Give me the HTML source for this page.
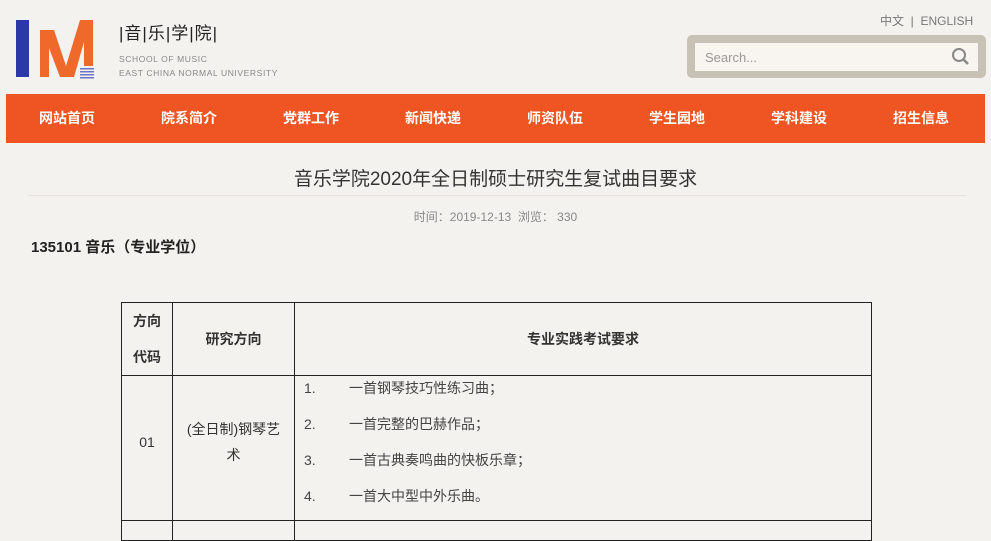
<!DOCTYPE html>
<html><head><meta charset="utf-8"><style>
body{margin:0;width:991px;height:523px;overflow:hidden;background:#f4f2ee;font-family:"Liberation Sans","Noto Sans CJK SC",sans-serif;position:relative}
.a{position:absolute}
.nav{left:6px;top:94px;width:979px;height:49px;background:#ef5423;display:flex}
.nav div{width:122px;text-align:center;color:#fff;font-weight:bold;font-size:14px;line-height:49px}
table{position:absolute;left:121px;top:302px;border-collapse:collapse;width:751px;font-size:14px;color:#333}
td{border:1px solid #222;text-align:center;padding:0}
.up{position:relative;top:-6px}
</style></head><body>
<svg class="a" style="left:14px;top:18px" width="82" height="62">
<rect x="2" y="2" width="13" height="57" fill="#2b39a8"/>
<polygon points="26,12 40,12 52,48 66,2 79,2 79,48 70,48 70,24 60,59 46,59 35,30 35,59 26,59" fill="#ef6a2a"/>
<rect x="66" y="50" width="14" height="1.5" fill="#6a73c4"/><rect x="66" y="53" width="14" height="1.5" fill="#6a73c4"/><rect x="66" y="56" width="14" height="1.5" fill="#6a73c4"/><rect x="66" y="59" width="14" height="1.5" fill="#6a73c4"/>
</svg>
<div class="a" style="left:119px;top:19px;font-size:17px;color:#222;letter-spacing:1px">|音|乐|学|院|</div>
<div class="a" style="left:119px;top:52px;font-size:8.5px;color:#888;letter-spacing:.6px;line-height:14px">SCHOOL OF MUSIC<br>EAST CHINA NORMAL UNIVERSITY</div>
<div class="a" style="left:880px;top:12px;font-size:12px;color:#777">中文 &nbsp;|&nbsp; ENGLISH</div>
<div class="a" style="left:687px;top:35px;width:299px;height:43px;background:#c7c2b5;border-radius:5px"></div>
<div class="a" style="left:695px;top:43px;width:283px;height:28px;background:#f8f4ef"></div>
<div class="a" style="left:705px;top:50px;font-size:13px;color:#999">Search...</div>
<svg class="a" style="left:951px;top:47px" width="20" height="20"><circle cx="8" cy="8" r="6" stroke="#888" stroke-width="2" fill="none"/><line x1="12.5" y1="12.5" x2="17" y2="17" stroke="#888" stroke-width="2.5"/></svg>
<div class="a nav"><div>网站首页</div><div>院系简介</div><div>党群工作</div><div>新闻快递</div><div>师资队伍</div><div>学生园地</div><div>学科建设</div><div>招生信息</div></div>
<div class="a" style="left:0;width:991px;top:164px;text-align:center;font-size:19px;color:#333">音乐学院2020年全日制硕士研究生复试曲目要求</div>
<div class="a" style="left:28px;top:195px;width:938px;height:1px;background:#e6e3de"></div>
<div class="a" style="left:0;width:991px;top:208px;text-align:center;font-size:12px;color:#888">时间：2019-12-13 &nbsp;浏览： 330</div>
<div class="a" style="left:31px;top:236px;font-size:15px;font-weight:bold;color:#222">135101 音乐（专业学位）</div>
<table>
<tr style="height:73px"><td style="width:50px;font-weight:bold;line-height:36px">方向<br>代码</td><td style="width:121px;font-weight:bold">研究方向</td><td style="font-weight:bold">专业实践考试要求</td></tr>
<tr style="height:144px"><td><div class="up">01</div></td><td style="line-height:26px"><div class="up">(全日制)钢琴艺<br>术</div></td><td style="text-align:left;padding-left:9px;line-height:36px;color:#444"><div class="up">
<span style="display:inline-block;width:45px">1.</span>一首钢琴技巧性练习曲；<br><span style="display:inline-block;width:45px">2.</span>一首完整的巴赫作品；<br><span style="display:inline-block;width:45px">3.</span>一首古典奏鸣曲的快板乐章；<br><span style="display:inline-block;width:45px">4.</span>一首大中型中外乐曲。</div></td></tr>
<tr style="height:20px"><td></td><td></td><td></td></tr>
</table>
</body></html>
